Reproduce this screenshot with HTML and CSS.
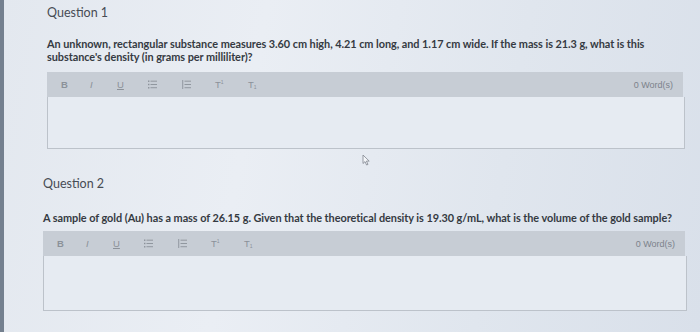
FILE: index.html
```html
<!DOCTYPE html>
<html>
<head>
<meta charset="utf-8">
<link rel="stylesheet" href="styles.css">
</head>
<body>
<div class="screen">
  <section class="q q1">
    <h2 class="title">Question 1</h2>
    <p class="text">An unknown, rectangular substance measures 3.60 cm high, 4.21 cm long, and 1.17 cm wide. If the mass is 21.3 g, what is this substance's density (in grams per milliliter)?</p>
    <div class="editor">
      <div class="toolbar">
        <span class="tool b">B</span>
        <span class="tool i">I</span>
        <span class="tool u">U</span>
        <span class="tool ul"><svg width="9" height="9" viewBox="0 0 9 9"><g fill="#8b9199"><rect x="0" y="0.5" width="1.4" height="1.4"/><rect x="0" y="3.8" width="1.4" height="1.4"/><rect x="0" y="7.1" width="1.4" height="1.4"/><rect x="2.5" y="0.7" width="6.5" height="0.9"/><rect x="2.5" y="4" width="6.5" height="0.9"/><rect x="2.5" y="7.3" width="6.5" height="0.9"/></g></svg></span>
        <span class="tool ol"><svg width="9" height="9" viewBox="0 0 9 9"><g fill="#8b9199"><rect x="0.3" y="0" width="0.9" height="9"/><rect x="2.5" y="0.7" width="6.5" height="0.9"/><rect x="2.5" y="4" width="6.5" height="0.9"/><rect x="2.5" y="7.3" width="6.5" height="0.9"/></g></svg></span>
        <span class="tool t">T<sup>1</sup></span>
        <span class="tool t">T<sub>1</sub></span>
        <span class="words">0 Word(s)</span>
      </div>
      <div class="area"></div>
    </div>
  </section>
  <section class="q q2">
    <h2 class="title">Question 2</h2>
    <p class="text">A sample of gold (Au) has a mass of 26.15 g. Given that the theoretical density is 19.30 g/mL, what is the volume of the gold sample?</p>
    <div class="editor">
      <div class="toolbar">
        <span class="tool b">B</span>
        <span class="tool i">I</span>
        <span class="tool u">U</span>
        <span class="tool ul"><svg width="9" height="9" viewBox="0 0 9 9"><g fill="#8b9199"><rect x="0" y="0.5" width="1.4" height="1.4"/><rect x="0" y="3.8" width="1.4" height="1.4"/><rect x="0" y="7.1" width="1.4" height="1.4"/><rect x="2.5" y="0.7" width="6.5" height="0.9"/><rect x="2.5" y="4" width="6.5" height="0.9"/><rect x="2.5" y="7.3" width="6.5" height="0.9"/></g></svg></span>
        <span class="tool ol"><svg width="9" height="9" viewBox="0 0 9 9"><g fill="#8b9199"><rect x="0.3" y="0" width="0.9" height="9"/><rect x="2.5" y="0.7" width="6.5" height="0.9"/><rect x="2.5" y="4" width="6.5" height="0.9"/><rect x="2.5" y="7.3" width="6.5" height="0.9"/></g></svg></span>
        <span class="tool t">T<sup>1</sup></span>
        <span class="tool t">T<sub>1</sub></span>
        <span class="words">0 Word(s)</span>
      </div>
      <div class="area"></div>
    </div>
  </section>
  <svg class="cursor" width="9" height="12" viewBox="0 0 9 12"><path d="M1 1 L1 9.5 L3 7.6 L4.6 11 L6 10.4 L4.4 7.1 L7.2 7.1 Z" fill="#f4f6f9" stroke="#8a9098" stroke-width="0.9"/></svg>
</div>
</body>
</html>
```
FILE: styles.css
```css
html, body {
  margin: 0;
  padding: 0;
}
body {
  width: 700px;
  height: 332px;
  overflow: hidden;
  background: #dfe5ed;
  font-family: Lato, "Open Sans", sans-serif;
}
.screen {
  position: relative;
  height: 332px;
  border-left: 4px solid #74808f;
  box-sizing: border-box;
  background: linear-gradient(100deg, #e3e8ef 0%, #eaeef4 35%, #e0e6ee 70%, #d9e0ea 100%);
}
.q1 {
  margin-left: 43px;
  width: 638px;
  padding-top: 5px;
}
.q2 {
  margin-left: 39px;
  width: 644px;
  padding-top: 27px;
}
.title {
  margin: 0;
  font-size: 12.5px;
  line-height: 16px;
  font-weight: 400;
  color: #474c54;
}
.text {
  margin: 16px 0 0;
  font-size: 10.9px;
  line-height: 13px;
  font-weight: 700;
  letter-spacing: -0.05px;
  color: #353a42;
}
.q1 .text {
  max-width: 610px;
}
.q2 .text {
  margin-top: 19px;
}
.editor {
  margin-top: 9px;
}
.q2 .editor {
  margin-top: 7px;
}
.toolbar {
  height: 25px;
  background: #c7cdd5;
  display: flex;
  align-items: center;
  padding: 0 10px 0 14px;
  margin-right: 2px;
}
.tool {
  width: 28px;
  display: flex;
  align-items: flex-start;
  color: #8b9199;
  font-size: 9.5px;
  line-height: 9px;
  font-family: "Liberation Sans", Arial, sans-serif;
}
.tool.b { font-weight: 700; width: 29px; }
.tool.i { font-style: italic; width: 27px; }
.tool.u { text-decoration: underline; width: 31px; }
.tool.ul { width: 34px; }
.tool.ol { width: 33px; }
.tool.t { width: 33px; }
.tool sup, .tool sub { font-size: 5px; line-height: 5px; }
.tool sub { position: relative; top: 5px; vertical-align: baseline; }
.tool sup { vertical-align: baseline; }
.words {
  margin-left: auto;
  font-size: 9px;
  color: #7c828b;
  font-family: "Liberation Sans", Arial, sans-serif;
}
.area {
  height: 51px;
  border: 1px solid #bcc2ca;
  border-top: none;
  background: #e6ebf2;
}
.q2 .area {
  height: 54px;
}
.cursor {
  position: absolute;
  left: 358px;
  top: 154px;
}
```
